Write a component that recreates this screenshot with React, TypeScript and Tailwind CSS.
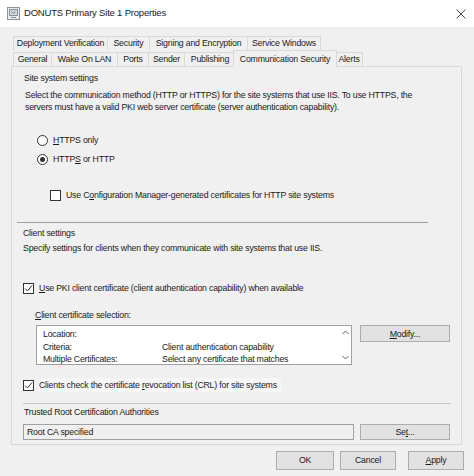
import React from "react";

const font = { fontFamily: '"Liberation Sans", Arial, sans-serif' };

function U({ children }: { children: React.ReactNode }) {
  return <span className="underline underline-offset-[1px] decoration-[0.5px]">{children}</span>;
}

function Radio({ checked }: { checked?: boolean }) {
  return (
    <span className="flex h-[11px] w-[11px] shrink-0 items-center justify-center rounded-full border border-[#333] bg-white">
      {checked && <span className="h-[5px] w-[5px] rounded-full bg-[#333]" />}
    </span>
  );
}

function Check({ checked }: { checked?: boolean }) {
  return (
    <span className="flex h-[11px] w-[11px] shrink-0 items-center justify-center border border-[#333] bg-white">
      {checked && (
        <svg width="9" height="9" viewBox="0 0 9 9">
          <path d="M1 4.5 L3.5 7 L8 1.5" fill="none" stroke="#333" strokeWidth="1" />
        </svg>
      )}
    </span>
  );
}

function Btn({ children, className = "" }: { children: React.ReactNode; className?: string }) {
  return (
    <div
      className={`flex items-center justify-center whitespace-nowrap border border-[#adadad] bg-[#e1e1e1] text-[#1a1a1a] ${className}`}
    >
      {children}
    </div>
  );
}

function Tab({ label, w }: { label: string; w: number }) {
  return (
    <div
      className="flex h-[14px] items-center justify-center whitespace-nowrap border border-b-0 border-r-0 border-[#d9d9d9] bg-[#f0f0f0] text-[#1a1a1a] last:border-r"
      style={{ width: w }}
    >
      {label}
    </div>
  );
}

export default function App() {
  return (
    <div
      style={font}
      className="flex h-[476px] w-[474px] flex-col overflow-hidden bg-[#f0f0f0] text-[8.75px] tracking-[-0.2px] text-[#1a1a1a]"
    >
      {/* title bar */}
      <div className="flex h-[27px] shrink-0 items-center bg-white pl-[7px] pr-[7px]">
        <svg width="13" height="13" viewBox="0 0 13 13" className="shrink-0">
          <rect x="0.5" y="0.5" width="12" height="12" fill="#e8ecef" stroke="#8a9299" />
          <rect x="2.5" y="2.5" width="8" height="6" fill="#cfd6dc" stroke="#8a9299" />
          <path d="M4 10.5 H9" stroke="#8a9299" />
          <path d="M4.5 4.5 L6.5 6.5 L8.5 4.5" stroke="#7c858c" fill="none" />
        </svg>
        <span className="ml-[4px] text-[9.5px] tracking-[-0.2px] text-[#1a1a1a]">
          DONUTS Primary Site 1 Properties
        </span>
        <svg width="10" height="10" viewBox="0 0 10 10" className="ml-auto mr-[1px]">
          <path d="M0.5 0.5 L9.5 9.5 M9.5 0.5 L0.5 9.5" stroke="#333" strokeWidth="0.9" />
        </svg>
      </div>

      {/* tabs */}
      <div className="ml-[13px] mt-[9px] flex flex-col">
        <div className="flex">
          <Tab label="Deployment Verification" w={94} />
          <Tab label="Security" w={42} />
          <Tab label="Signing and Encryption" w={98} />
          <Tab label="Service Windows" w={74} />
        </div>
        <div className="flex items-end">
          <Tab label="General" w={38} />
          <Tab label="Wake On LAN" w={66} />
          <Tab label="Ports" w={31} />
          <Tab label="Sender" w={36} />
          <Tab label="Publishing" w={51} />
          <div className="relative z-10 -mb-px -mx-[2px] flex h-[17px] w-[104px] items-start justify-center whitespace-nowrap border border-b-0 border-[#d9d9d9] bg-[#f0f0f0] pt-[2px]">
            Communication Security
          </div>
          <Tab label="Alerts" w={28} />
        </div>
      </div>

      {/* panel */}
      <div className="ml-[11px] flex h-[379px] w-[451px] flex-col border border-[#d9d9d9] leading-[12px]">
        <div className="ml-[12px] mt-[5px] h-[12px]">Site system settings</div>
        <div className="ml-[13px] mt-[5px] w-[398px] leading-[12px]">
          Select the communication method (HTTP or HTTPS) for the site systems that use IIS. To use HTTPS, the
          servers must have a valid PKI web server certificate (server authentication capability).
        </div>
        <div className="ml-[25px] mt-[20px] flex h-[14px] items-center gap-[5px]">
          <Radio />
          <span>
            <U>H</U>TTPS only
          </span>
        </div>
        <div className="ml-[25px] mt-[5px] flex h-[14px] items-center gap-[5px]">
          <Radio checked />
          <span>
            HTTP<U>S</U> or HTTP
          </span>
        </div>
        <div className="ml-[38px] mt-[22px] flex h-[14px] items-center gap-[5px]">
          <Check />
          <span>
            Use C<U>o</U>nfiguration Manager-generated certificates for HTTP site systems
          </span>
        </div>
        <div className="ml-[5px] mt-[20px] h-px w-[411px] bg-[#a0a0a0]" />
        <div className="ml-[11px] mt-[4px] h-[12px]">Client settings</div>
        <div className="ml-[11px] mt-[3px] h-[12px]">
          Specify settings for clients when they communicate with site systems that use IIS.
        </div>
        <div className="ml-[11px] mt-[27px] flex h-[14px] items-center gap-[5px]">
          <Check checked />
          <span>
            <U>U</U>se PKI client certificate (client authentication capability) when available
          </span>
        </div>
        <div className="ml-[23px] mt-[14px] h-[12px]">
          <U>C</U>lient certificate selection:
        </div>
        <div className="ml-[24px] mt-[4px] flex items-start gap-[8px]">
          <div className="relative h-[40px] w-[316px] overflow-hidden border border-[#a0a0a0] bg-white">
            <div className="pl-[6px] pt-[2px] leading-[12.5px]">
              <div className="flex">
                <span className="w-[119px]">Location:</span>
              </div>
              <div className="flex">
                <span className="w-[119px]">Criteria:</span>
                <span>Client authentication capability</span>
              </div>
              <div className="flex">
                <span className="w-[119px]">Multiple Certificates:</span>
                <span>Select any certificate that matches</span>
              </div>
            </div>
            <div className="absolute right-0 top-0 flex h-full w-[12px] flex-col items-center justify-between bg-white py-[4px]">
              <svg width="7" height="5" viewBox="0 0 7 5">
                <path d="M0.5 4 L3.5 1 L6.5 4" stroke="#606060" fill="none" />
              </svg>
              <svg width="7" height="5" viewBox="0 0 7 5">
                <path d="M0.5 1 L3.5 4 L6.5 1" stroke="#606060" fill="none" />
              </svg>
            </div>
          </div>
          <Btn className="h-[17px] w-[90px]">
            <span>
              <U>M</U>odify...
            </span>
          </Btn>
        </div>
        <div className="ml-[11px] mt-[13px] flex h-[14px] items-center gap-[5px]">
          <Check checked />
          <span className="bg-[#f6f6f6] py-[1px] pr-[4px]">
            Clients check the certificate <U>r</U>evocation list (CRL) for site systems
          </span>
        </div>
        <div className="ml-[11px] mt-[11px] h-px w-[428px] bg-[#c8c8c8]" />
        <div className="ml-[12px] mt-[2px] h-[12px]">Trusted Root Certification Authorities</div>
        <div className="ml-[11px] mt-[6px] flex items-center gap-[6px]">
          <div className="flex h-[16px] w-[331px] items-center border border-[#a0a0a0] bg-[#f0f0f0] pl-[3px]">
            Root CA specified
          </div>
          <Btn className="h-[16px] w-[90px]">
            <span>
              Se<U>t</U>...
            </span>
          </Btn>
        </div>
      </div>

      {/* dialog buttons */}
      <div className="mt-[6px] flex gap-[6px] pl-[276px]">
        <Btn className="h-[19px] w-[58px] border-[#0078d7]">OK</Btn>
        <Btn className="h-[19px] w-[56px]">Cancel</Btn>
        <Btn className="ml-[6px] h-[19px] w-[56px]">
          <span>
            <U>A</U>pply
          </span>
        </Btn>
      </div>
    </div>
  );
}
